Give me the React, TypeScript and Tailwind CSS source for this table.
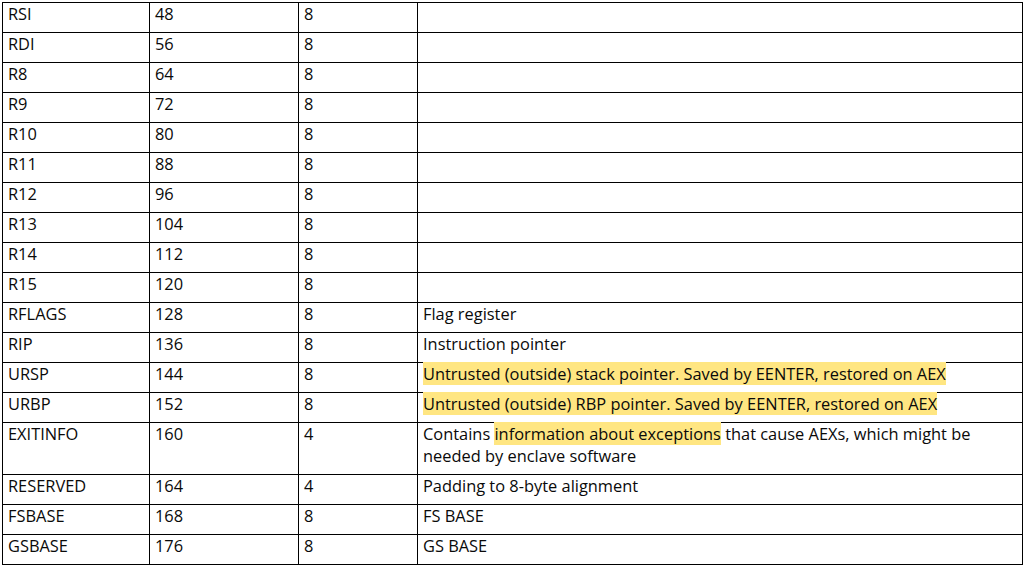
import React from 'react';

interface Field {
  name: string;
  offset: string;
  size: string;
  desc?: React.ReactNode;
}

function Mark({ children }: { children: React.ReactNode }) {
  return <span className="bg-[#ffe682]">{children}</span>;
}

const fields: Field[] = [
  { name: 'RSI', offset: '48', size: '8' },
  { name: 'RDI', offset: '56', size: '8' },
  { name: 'R8', offset: '64', size: '8' },
  { name: 'R9', offset: '72', size: '8' },
  { name: 'R10', offset: '80', size: '8' },
  { name: 'R11', offset: '88', size: '8' },
  { name: 'R12', offset: '96', size: '8' },
  { name: 'R13', offset: '104', size: '8' },
  { name: 'R14', offset: '112', size: '8' },
  { name: 'R15', offset: '120', size: '8' },
  { name: 'RFLAGS', offset: '128', size: '8', desc: 'Flag register' },
  { name: 'RIP', offset: '136', size: '8', desc: 'Instruction pointer' },
  {
    name: 'URSP',
    offset: '144',
    size: '8',
    desc: <Mark>Untrusted (outside) stack pointer. Saved by EENTER, restored on AEX</Mark>,
  },
  {
    name: 'URBP',
    offset: '152',
    size: '8',
    desc: <Mark>Untrusted (outside) RBP pointer. Saved by EENTER, restored on AEX</Mark>,
  },
  {
    name: 'EXITINFO',
    offset: '160',
    size: '4',
    desc: (
      <>
        Contains <Mark>information about exceptions</Mark> that cause AEXs, which might be
        <br />
        needed by enclave software
      </>
    ),
  },
  { name: 'RESERVED', offset: '164', size: '4', desc: 'Padding to 8-byte alignment' },
  { name: 'FSBASE', offset: '168', size: '8', desc: 'FS BASE' },
  { name: 'GSBASE', offset: '176', size: '8', desc: 'GS BASE' },
];

const cell = 'border-r border-black px-[5px] pt-0 pb-[7px] whitespace-nowrap';

export default function App() {
  return (
    <div className="min-h-[571px] bg-white pt-[2px] pl-[2px]" style={{ fontFamily: '"Open Sans", "Liberation Sans", sans-serif' }}>
      <div className="w-[1021px] border-l border-t border-black text-[16.4px] leading-[22px] text-[#0a0a0a]">
        {fields.map((f) => (
          <div key={f.name} className="grid grid-cols-[147px_149px_119px_605px] border-b border-black">
            <div className={cell}>{f.name}</div>
            <div className={cell}>{f.offset}</div>
            <div className={cell}>{f.size}</div>
            <div className={cell}>{f.desc}</div>
          </div>
        ))}
      </div>
    </div>
  );
}
